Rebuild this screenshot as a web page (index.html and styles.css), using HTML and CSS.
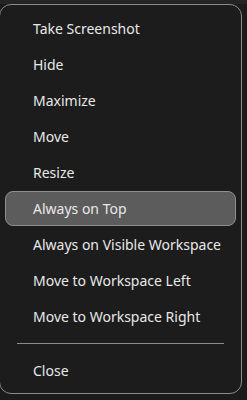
FILE: index.html
```html
<!DOCTYPE html>
<html>
<head>
    <meta charset="utf-8">
    <title>Window Menu</title>
    <link rel="stylesheet" href="styles.css">
</head>
<body>
    <div class="top-strip"></div>
    <div class="window-menu">
        <div class="menu-item">Take Screenshot</div>
        <div class="menu-item">Hide</div>
        <div class="menu-item">Maximize</div>
        <div class="menu-item">Move</div>
        <div class="menu-item">Resize</div>
        <div class="menu-item selected">Always on Top</div>
        <div class="menu-item">Always on Visible Workspace</div>
        <div class="menu-item">Move to Workspace Left</div>
        <div class="menu-item">Move to Workspace Right</div>
        <div class="menu-separator"></div>
        <div class="menu-item">Close</div>
    </div>
</body>
</html>
```

FILE: styles.css
```css
body {
    margin: 0;
    background-color: #1b1b1b;
    font-family: "Noto Sans", "Open Sans", sans-serif;
    overflow: hidden;
}

.top-strip {
    height: 4px;
    background-color: #242424;
}

.window-menu {
    width: 231px;
    margin-left: -1px;
    padding: 6px 5px 4px 5px;
    background-color: #1c1c1c;
    border: 1px solid #8c8c8c;
    border-radius: 12px;
}

.menu-item {
    height: 35px;
    margin-bottom: 1px;
    padding-left: 27px;
    border: 1px solid transparent;
    border-radius: 8px;
    box-sizing: border-box;
    display: flex;
    align-items: center;
    color: #e8e8e8;
    font-size: 14px;
    white-space: nowrap;
}

.menu-item.selected {
    background-color: #5c5c5c;
    border-color: #8e8e8e;
}

.menu-separator {
    height: 1px;
    margin: 9px 12px 9px 12px;
    background-color: #8a8a8a;
}
```
